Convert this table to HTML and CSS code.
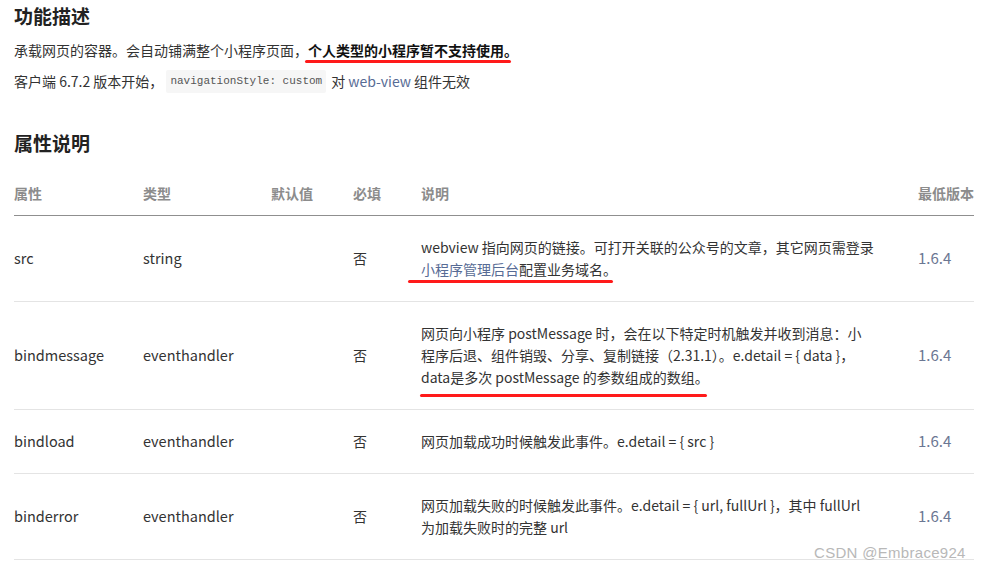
FILE: index.html
```html
<!DOCTYPE html>
<html lang="zh-CN">
<head>
<meta charset="utf-8">
<title>web-view</title>
<link rel="stylesheet" href="styles.css">
</head>
<body>
<div class="page">
  <h2 class="heading">功能描述</h2>
  <p class="intro">承载网页的容器。会自动铺满整个小程序页面，<strong class="mark mark-a">个人类型的小程序暂不支持使用。</strong></p>
  <p class="intro second">客户端 6.7.2 版本开始，<code class="chip">navigationStyle: custom</code>对 <span class="link">web-view</span> 组件无效</p>

  <h2 class="heading heading-2">属性说明</h2>
  <table class="props">
    <colgroup>
      <col class="c-name"><col class="c-type"><col class="c-def"><col class="c-req"><col class="c-desc"><col class="c-ver">
    </colgroup>
    <thead>
      <tr><th>属性</th><th>类型</th><th>默认值</th><th>必填</th><th>说明</th><th>最低版本</th></tr>
    </thead>
    <tbody>
      <tr>
        <td>src</td><td>string</td><td></td><td class="req">否</td>
        <td class="desc">webview 指向网页的链接。可打开关联的公众号的文章，其它网页需登录<br><span class="mark mark-b"><span class="link">小程序管理后台</span>配置业务域名。</span></td>
        <td class="ver">1.6.4</td>
      </tr>
      <tr>
        <td>bindmessage</td><td>eventhandler</td><td></td><td class="req">否</td>
        <td class="desc">网页向小程序 postMessage 时，会在以下特定时机触发并收到消息：小<br>程序后退、组件销毁、分享、复制链接（2.31.1）。e.detail = { data }，<br><span class="mark mark-c">data是多次 postMessage 的参数组成的数组。</span></td>
        <td class="ver">1.6.4</td>
      </tr>
      <tr>
        <td>bindload</td><td>eventhandler</td><td></td><td class="req">否</td>
        <td class="desc">网页加载成功时候触发此事件。e.detail = { src }</td>
        <td class="ver">1.6.4</td>
      </tr>
      <tr>
        <td>binderror</td><td>eventhandler</td><td></td><td class="req">否</td>
        <td class="desc">网页加载失败的时候触发此事件。e.detail = { url, fullUrl }，其中 fullUrl<br>为加载失败时的完整 url</td>
        <td class="ver">1.6.4</td>
      </tr>
    </tbody>
  </table>
  <div class="watermark">CSDN @Embrace924</div>
</div>
</body>
</html>
```

FILE: styles.css
```css
html, body {
  margin: 0;
  padding: 0;
  background: #ffffff;
}

body {
  font-family: "Noto Sans CJK SC", "Noto Sans", sans-serif;
  color: #333333;
  font-size: 14px;
}

.page {
  position: relative;
  padding: 0 7px 20px 14px;
}

.heading {
  margin: 0;
  font-size: 19px;
  line-height: 32px;
  font-weight: 700;
  color: #222222;
}

.heading-2 {
  margin-top: 34px;
}

.intro {
  margin: 7px 0 0;
  line-height: 22px;
  font-size: 14px;
}

.intro.second {
  margin-top: 9px;
}

.intro strong {
  font-weight: 700;
  color: #111111;
}

.chip {
  display: inline-block;
  font-family: "Liberation Mono", "DejaVu Sans Mono", monospace;
  font-size: 11px;
  line-height: 23px;
  padding: 0 4px;
  margin: 0 5px 0 3px;
  background: #f6f6f6;
  color: #555555;
  border-radius: 2px;
  vertical-align: top;
}

.link {
  color: #576b95;
}

.mark {
  position: relative;
}

.mark::after {
  content: "";
  position: absolute;
  height: 3px;
  background: #ff1a1a;
  border-radius: 2px;
}

.mark-a::after {
  left: -3px;
  right: 7px;
  bottom: -3px;
}

.mark-b::after {
  left: -13px;
  right: 4px;
  bottom: -4px;
}

.mark-c::after {
  left: -1px;
  right: 2px;
  bottom: -10px;
}

.props {
  width: 960px;
  table-layout: fixed;
  border-collapse: collapse;
  margin-top: 12px;
}

.c-name { width: 129px; }
.c-type { width: 128px; }
.c-def { width: 82px; }
.c-req { width: 68px; }
.c-desc { width: 497px; }
.c-ver { width: 56px; }

.props th {
  text-align: left;
  font-size: 14px;
  font-weight: 700;
  color: #8c8c8c;
  line-height: 22px;
  padding: 11px 0 11px;
  border-bottom: 1px solid #8f8f8f;
  white-space: nowrap;
}

.props td {
  padding: 20px 0 21px;
  line-height: 22px;
  font-size: 14.5px;
  color: #333333;
  vertical-align: middle;
  border-bottom: 1px solid #e4e4e4;
}

.props td.req {
  font-size: 14px;
}

.props td.desc {
  font-size: 14px;
  padding-right: 40px;
  white-space: nowrap;
}

.props td.ver {
  color: #6b7793;
  font-size: 15px;
}

.watermark {
  position: absolute;
  left: 814px;
  top: 544px;
  font-family: "Liberation Sans", Arial, sans-serif;
  font-size: 15px;
  color: #b8b8b8;
  letter-spacing: 0.3px;
}
```
